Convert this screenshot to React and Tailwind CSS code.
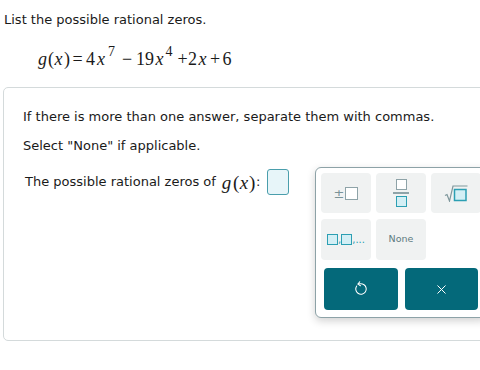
import React from "react";
import { RotateCcw, X } from "lucide-react";

const sans = { fontFamily: '"DejaVu Sans", Verdana, sans-serif' };
const serif = { fontFamily: '"Liberation Serif", "Times New Roman", serif' };

// one glyph of the formula, in a cell of fixed width
const G = ({ w, ml = "", italic, up, children }) => (
  <span
    className={
      "inline-block text-center " +
      w + " " + ml + " " +
      (italic ? "italic " : "") +
      (up ? "relative -top-[9px] text-[14px]" : "")
    }
  >
    {children}
  </span>
);

const Box = ({ teal, className = "" }) => (
  <span
    className={
      "inline-block border-[1.5px] " +
      (teal ? "border-[#2b9fb3] bg-[#d3eff5] " : "border-[#8ea3a8] bg-white ") +
      className
    }
  />
);

const KeyButton = ({ children }) => (
  <button className="flex h-full w-full items-center justify-center rounded-[4px] bg-[#f0f2f2]">
    {children}
  </button>
);

const Keypad = () => (
  <div className="absolute left-[311px] top-[79px] h-[151px] w-[172px] rounded-[6px] border border-[#8da2a7] bg-white pl-[5px] pt-[5px] shadow-[0_3px_8px_rgba(0,0,0,0.18)]">
    <div className="grid grid-cols-[50px_50px_50px] grid-rows-[40px_41px] gap-x-[5px] gap-y-[6px]">
      <KeyButton>
        <span className="flex items-center text-[#7a9499]">
          <span className="text-[13px] leading-none" style={sans}>±</span>
          <Box className="ml-[1px] h-[13px] w-[13px]" />
        </span>
      </KeyButton>
      <KeyButton>
        <span className="flex flex-col items-center">
          <Box className="h-[11px] w-[11px]" />
          <span className="my-[2px] h-[1.5px] w-[16px] bg-[#8ea3a8]" />
          <Box teal className="h-[11px] w-[11px]" />
        </span>
      </KeyButton>
      <KeyButton>
        <svg width="24" height="17" viewBox="0 0 24 17">
          <path d="M1 10.5 L3 9.5 L5.5 16 L9 1 L23.5 1" fill="none" stroke="#7f979c" strokeWidth="1.2" />
          <rect x="10.5" y="4.5" width="11.5" height="11" fill="#d3eff5" stroke="#2b9fb3" strokeWidth="1.5" />
        </svg>
      </KeyButton>
      <KeyButton>
        <span className="flex items-end text-[#2b9fb3]">
          <Box teal className="h-[11px] w-[11px]" />
          <span className="text-[10px] leading-none" style={sans}>,</span>
          <Box teal className="h-[11px] w-[11px]" />
          <span className="text-[10px] leading-none" style={sans}>,...</span>
        </span>
      </KeyButton>
      <KeyButton>
        <span className="text-[9.5px] text-[#5d7b81]" style={sans}>None</span>
      </KeyButton>
    </div>
    <div className="ml-[3px] mt-[8px] flex gap-[7px]">
      <button className="flex h-[42px] w-[74px] items-center justify-center rounded-[4px] bg-[#04697a]">
        <RotateCcw size={14} color="white" strokeWidth={1.8} className="rotate-[35deg]" />
      </button>
      <button className="flex h-[42px] w-[73px] items-center justify-center rounded-[4px] bg-[#04697a]">
        <X size={15} color="white" strokeWidth={1.6} />
      </button>
    </div>
  </div>
);

export default function App() {
  return (
    <div className="h-[370px] w-[480px] overflow-hidden bg-white text-[#1a1a1a]" style={sans}>
      <p className="pl-[4px] pt-[12px] text-[13px] leading-[16px]">List the possible rational zeros.</p>
      <div className="mt-[20px] whitespace-nowrap pl-[37px] text-[18px] leading-[22px]" style={serif}>
        <G w="w-[11px]" italic>g</G>
        <G w="w-[5px]">(</G>
        <G w="w-[11px]" italic>x</G>
        <G w="w-[5px]">)</G>
        <G w="w-[13px]" ml="ml-[2px]">=</G>
        <G w="w-[9px]" ml="ml-[2px]">4</G>
        <G w="w-[12px]" italic>x</G>
        <G w="w-[9px]" up>7</G>
        <G w="w-[12px]" ml="ml-[5px]">−</G>
        <G w="w-[18px]" ml="ml-[3px]">19</G>
        <G w="w-[11px]" italic>x</G>
        <G w="w-[8px]" up>4</G>
        <G w="w-[11px]" ml="ml-[4px]">+</G>
        <G w="w-[9px]">2</G>
        <G w="w-[11px]" italic>x</G>
        <G w="w-[12px]" ml="ml-[1px]">+</G>
        <G w="w-[10px]" ml="ml-[1px]">6</G>
      </div>
      <div className="relative ml-[3px] mt-[15px] h-[254px] w-[520px] rounded-[5px] border border-[#d4dadb] pl-[19px] pt-[21px]">
        <p className="text-[13px] leading-[16px]">If there is more than one answer, separate them with commas.</p>
        <p className="mt-[13px] text-[13px] leading-[16px]">Select "None" if applicable.</p>
        <div className="mt-[15px] flex items-center pl-[2px]">
          <span className="text-[13px]">The possible rational zeros of</span>
          <span className="ml-[5px] whitespace-nowrap text-[19px] leading-none" style={serif}>
            <G w="w-[11px]" italic>g</G>
            <G w="w-[6px]" ml="ml-[1px]">(</G>
            <G w="w-[10px]" italic>x</G>
            <G w="w-[5px]">)</G>
          </span>
          <span className="ml-[2px] text-[13px]">:</span>
          <span className="ml-[7px] h-[26px] w-[22px] rounded-[3px] border border-[#4a9eac] bg-[#e7f5f9]" />
        </div>
        <Keypad />
      </div>
    </div>
  );
}
